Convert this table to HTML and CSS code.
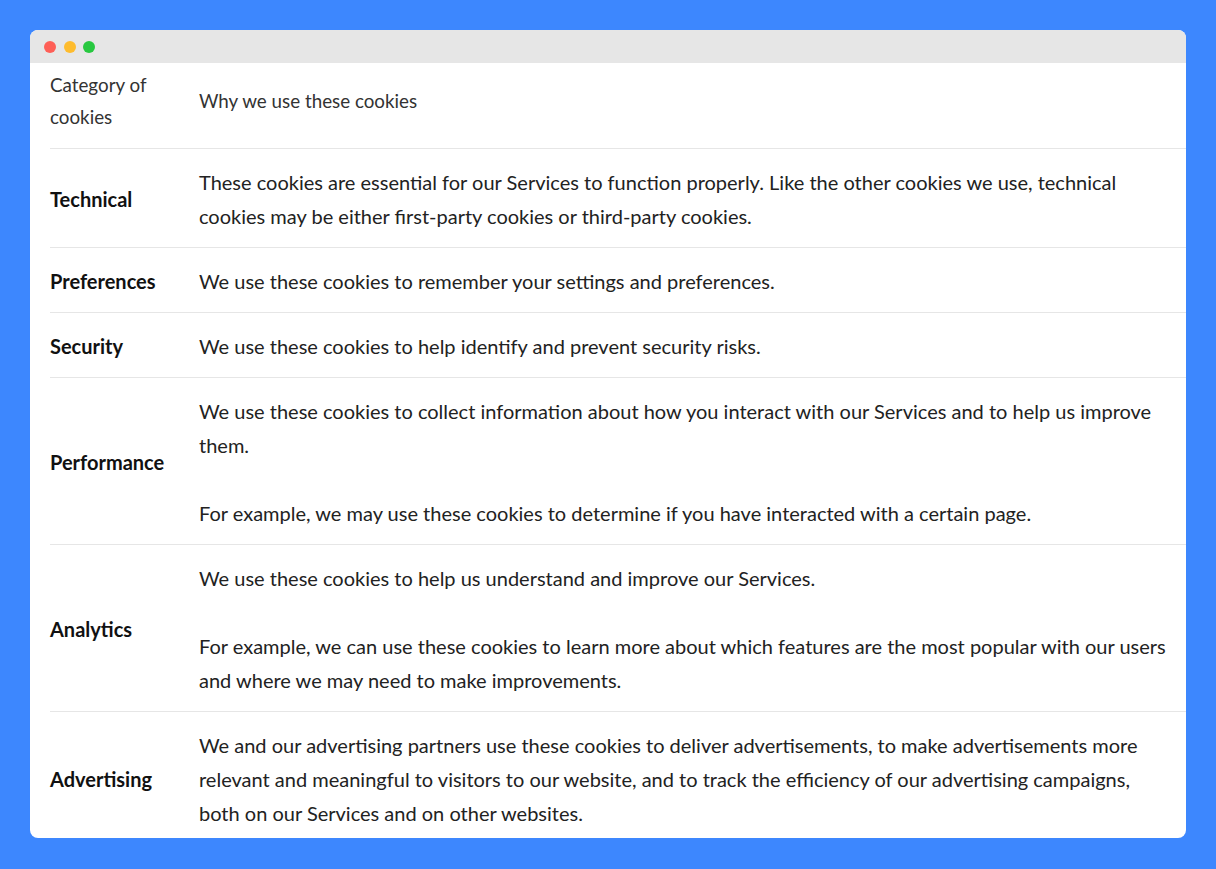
FILE: index.html
```html
<!DOCTYPE html>
<html lang="en">
<head>
<meta charset="utf-8">
<title>Cookies</title>
<link rel="stylesheet" href="styles.css">
</head>
<body>
<div class="window">
  <div class="titlebar">
    <span class="dot red"></span>
    <span class="dot yellow"></span>
    <span class="dot green"></span>
  </div>
  <table class="cookies">
    <thead>
      <tr>
        <th class="cat">Category of cookies</th>
        <th class="why">Why we use these cookies</th>
      </tr>
    </thead>
    <tbody>
      <tr>
        <td class="cat">Technical</td>
        <td class="why"><p>These cookies are essential for our Services to function properly. Like the other cookies we use, technical cookies may be either first-party cookies or third-party cookies.</p></td>
      </tr>
      <tr>
        <td class="cat">Preferences</td>
        <td class="why"><p>We use these cookies to remember your settings and preferences.</p></td>
      </tr>
      <tr>
        <td class="cat">Security</td>
        <td class="why"><p>We use these cookies to help identify and prevent security risks.</p></td>
      </tr>
      <tr>
        <td class="cat">Performance</td>
        <td class="why"><p>We use these cookies to collect information about how you interact with our Services and to help us improve them.</p><p>For example, we may use these cookies to determine if you have interacted with a certain page.</p></td>
      </tr>
      <tr>
        <td class="cat">Analytics</td>
        <td class="why"><p>We use these cookies to help us understand and improve our Services.</p><p>For example, we can use these cookies to learn more about which features are the most popular with our users and where we may need to make improvements.</p></td>
      </tr>
      <tr>
        <td class="cat">Advertising</td>
        <td class="why"><p>We and our advertising partners use these cookies to deliver advertisements, to make advertisements more relevant and meaningful to visitors to our website, and to track the efficiency of our advertising campaigns, both on our Services and on other websites.</p></td>
      </tr>
    </tbody>
  </table>
</div>
</body>
</html>
```
FILE: styles.css
```css
html, body {
  margin: 0;
  padding: 0;
}
body {
  background: #3d87fe;
  font-family: Lato, "Open Sans", sans-serif;
  color: #222;
  padding: 30px;
  height: 869px;
  box-sizing: border-box;
  overflow: hidden;
}
.window {
  width: 1156px;
  height: 808px;
  background: #fff;
  border-radius: 8px;
  overflow: hidden;
}
.titlebar {
  height: 33px;
  background: #e6e6e6;
  display: flex;
  align-items: center;
  gap: 7.5px;
  padding-left: 14px;
}
.dot {
  width: 12px;
  height: 12px;
  border-radius: 50%;
}
.red { background: #fe5f57; }
.yellow { background: #febc2e; }
.green { background: #28c840; }

.cookies {
  margin-left: 20px;
  width: calc(100% - 20px);
  border-collapse: collapse;
  font-size: 20px;
  line-height: 34px;
}
.cookies th,
.cookies td {
  text-align: left;
  vertical-align: middle;
  border-bottom: 1px solid #e6e6e6;
  padding: 15.5px 0 14.5px;
}
.cookies th {
  font-weight: 400;
  color: #333;
  font-size: 18.8px;
  line-height: 32px;
  padding: 6px 0 15px;
}
.cookies .cat {
  width: 149px;
}
.cookies td.cat {
  font-weight: 700;
  font-size: 20px;
  color: #111;
}
.cookies .why {
  padding-right: 16px;
}
.cookies p {
  margin: 0;
}
.cookies p + p {
  margin-top: 34px;
}
```
